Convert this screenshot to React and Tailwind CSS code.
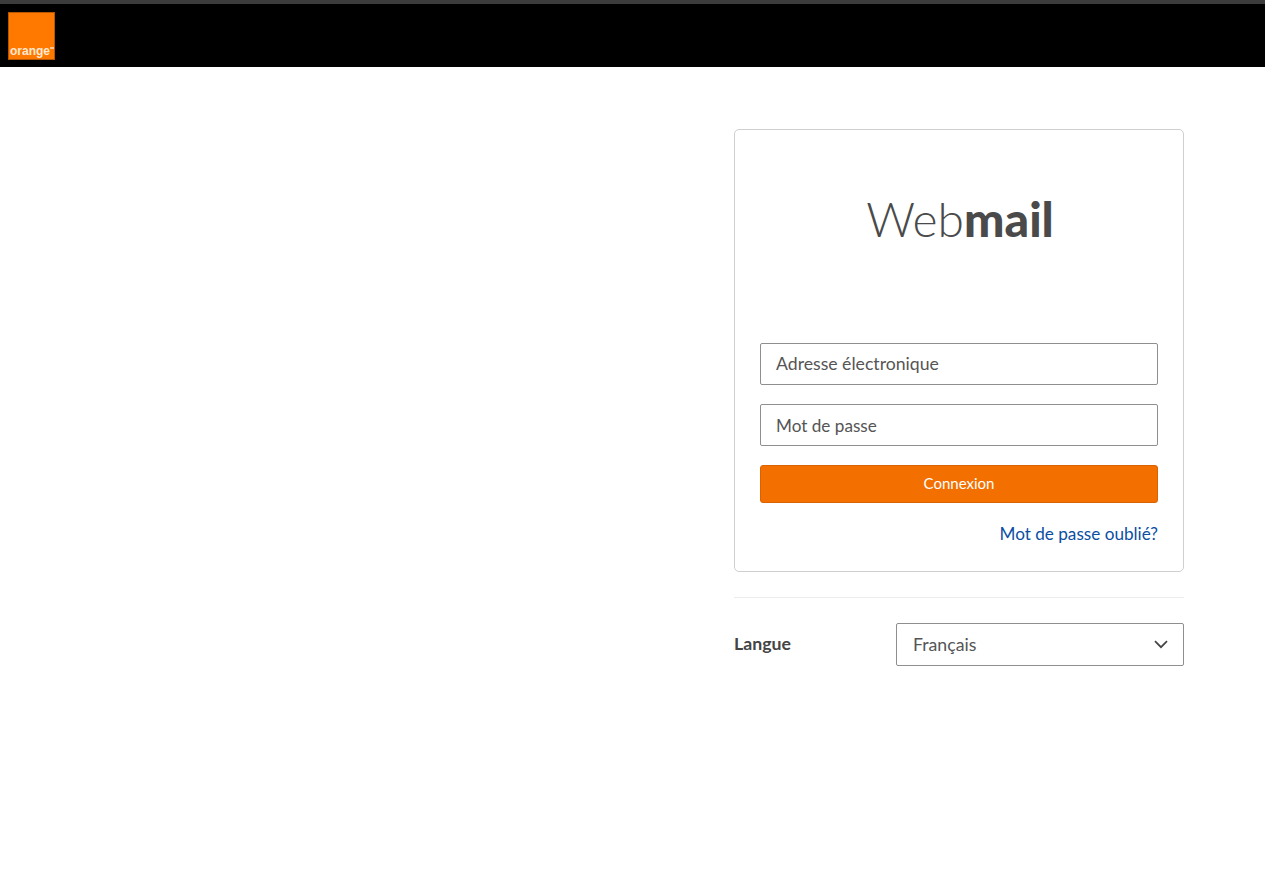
import React from 'react';

function Logo() {
  return (
    <div className="w-[47px] h-[48px] bg-[#ff7900] border border-[#b85600] flex items-end pl-[1px] pb-[1px]">
      <span className="font-['Liberation_Sans',sans-serif] font-bold text-[12px] leading-[14px] text-[#ffe9d2]">orange</span>
      <span className="mb-[9px] w-[4px] h-[2px] bg-[#ffc48f]" />
    </div>
  );
}

function Input({ label, className }) {
  return (
    <div className={`h-[42px] border border-[#8f8f8f] rounded-[2px] pl-[15px] flex items-center text-[#555] ${className}`}>
      {label}
    </div>
  );
}

export default function App() {
  return (
    <div className="min-h-[872px] bg-white font-['Lato',sans-serif]">
      <header className="h-[67px] bg-black border-t-4 border-[#3c3c3c] pl-[8px] pt-[8px]">
        <Logo />
      </header>

      <main className="flex justify-end pr-[81px] pt-[62px]">
        <div className="w-[450px]">
          <div className="h-[443px] border border-[#cfcfcf] rounded-[5px] px-[25px] flex flex-col">
            <h1 className="mt-[57px] h-[65px] pl-[2px] text-center text-[48px] leading-[64px] text-[#4a4a4a]">
              <span className="font-light">Web</span>
              <span className="font-black">mail</span>
            </h1>
            <Input label={<span className="text-[17.65px] leading-[20px]">Adresse électronique</span>} className="mt-[91px]" />
            <Input label={<span className="text-[17.15px] leading-[20px] mt-[1px]">Mot de passe</span>} className="mt-[19px]" />
            <button className="mt-[19px] h-[38px] pb-[2px] bg-[#f36f00] border border-[#d96300] rounded-[3px] text-white text-[15px]">
              Connexion
            </button>
            <a className="mt-[20px] self-end text-[17.15px] leading-[22px] text-[#0b4ea2]">Mot de passe oublié?</a>
          </div>

          <hr className="mt-[25px] border-[#ececec]" />

          <div className="mt-[25px] flex items-center justify-between">
            <span className="text-[17.7px] leading-[20px] -mt-[2px] font-bold text-[#444]">Langue</span>
            <div className="w-[288px] h-[43px] border border-[#8f8f8f] rounded-[2px] pl-[16px] pr-[15px] flex items-center justify-between text-[#555]">
              <span className="text-[17.7px] leading-[20px] mt-[1px]">Français</span>
              <svg width="14" height="9" viewBox="0 0 14 9" fill="none" stroke="#444" strokeWidth="1.7">
                <path d="M1 1.2 7 7.2 13 1.2" />
              </svg>
            </div>
          </div>
        </div>
      </main>
    </div>
  );
}
